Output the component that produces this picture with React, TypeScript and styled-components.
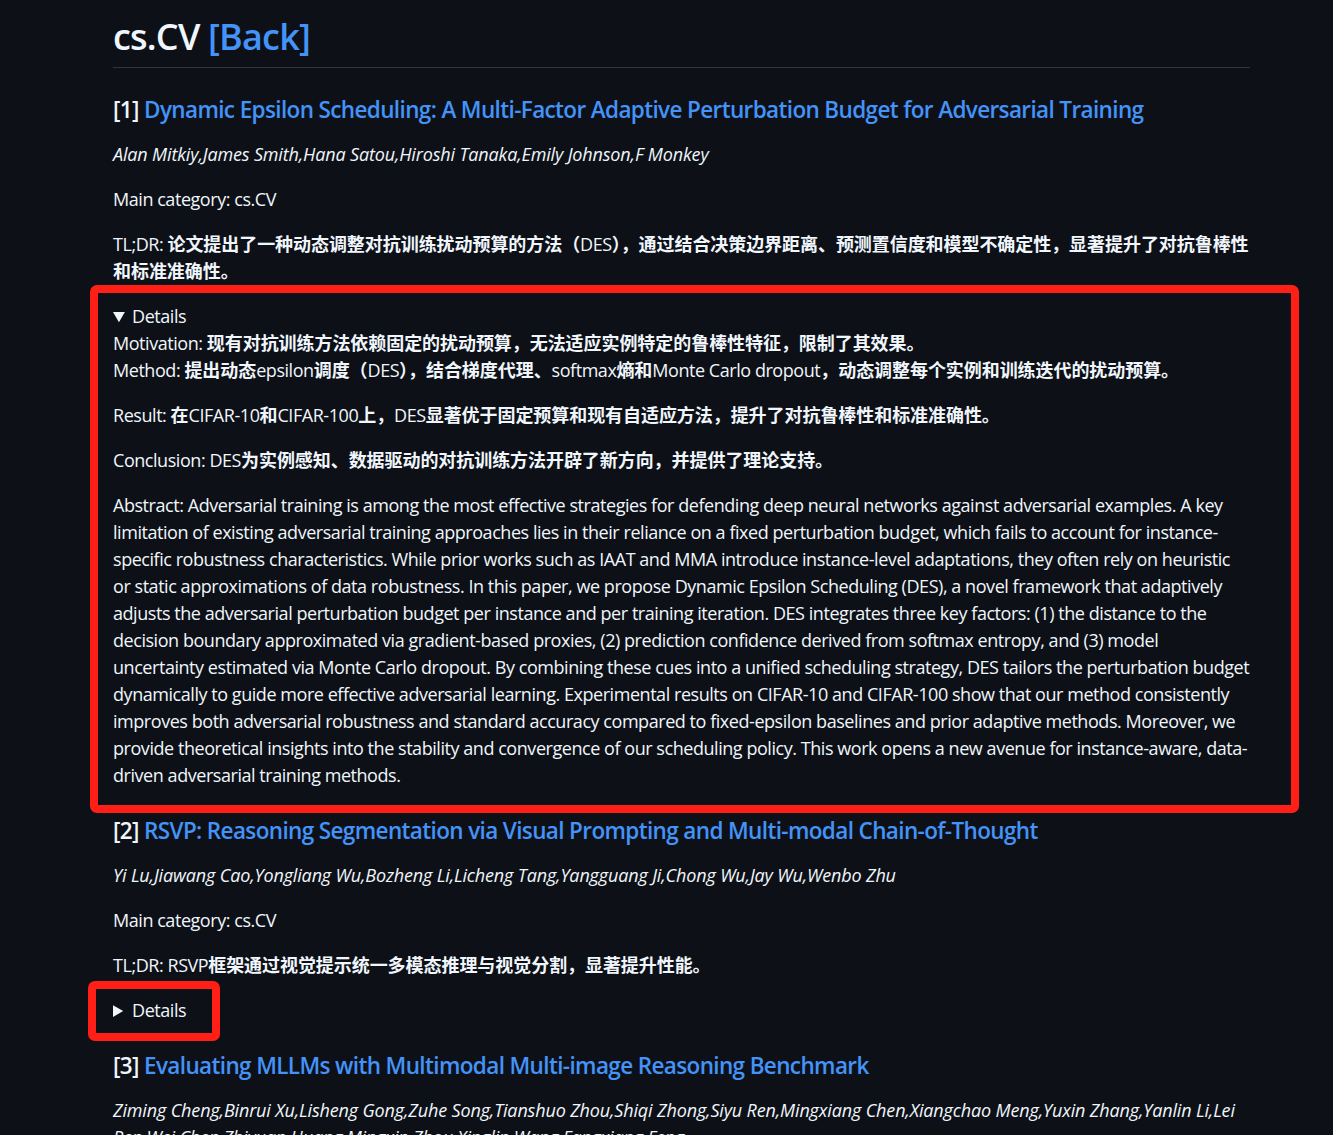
import React from 'react';
import styled, { createGlobalStyle } from 'styled-components';

const GlobalStyle = createGlobalStyle`
  html, body {
    margin: 0;
    padding: 0;
    background: #0d1117;
  }
  body {
    color: #f0f6fc;
    font-family: "Open Sans", "Noto Sans CJK SC", sans-serif;
    font-size: 18px;
    line-height: 27px;
    letter-spacing: -0.45px;
  }
`;

const Page = styled.main`
  padding: 14px 83px 40px 113px;
`;

const Heading = styled.h1`
  margin: 0 0 18px;
  padding-bottom: 8px;
  font-size: 36px;
  line-height: 45px;
  font-weight: 600;
  letter-spacing: -0.8px;
  border-bottom: 1px solid #3d444db3;
`;

const Link = styled.a`
  color: #4493f8;
  text-decoration: none;
`;

const PaperTitle = styled.h3`
  margin: 28px 0 17px;
  font-size: 22.5px;
  line-height: 28px;
  font-weight: 600;
  letter-spacing: -0.63px;
`;

const Para = styled.p`
  margin: 0 0 18px;
`;

const Authors = styled(Para)`
  font-style: italic;
  letter-spacing: -0.15px;
`;

// Chinese runs: no tightening, heavier weight like the YaHei rendering
const Han = styled.span`
  letter-spacing: -0.06px;
  font-weight: 600;
`;

const DetailsWrap = styled.div`
  position: relative;
  margin: 0 0 18px;
`;

const Summary = styled.summary`
  cursor: pointer;
`;

const Annotation = styled.span<{ $top: number; $left: number; $bottom: number; $width?: number; $right?: number }>`
  position: absolute;
  top: ${(p) => p.$top}px;
  left: ${(p) => p.$left}px;
  bottom: ${(p) => p.$bottom}px;
  ${(p) => (p.$width !== undefined ? `width: ${p.$width}px;` : `right: ${p.$right ?? 0}px;`)}
  border: 8px solid #ff1f16;
  border-radius: 7px;
  box-sizing: border-box;
  pointer-events: none;
`;

const CJK = /([\u3000-\u303f\u3400-\u9fff\uff00-\uffef]+)/;

function Rich({ text }: { text?: string }) {
  if (!text) return null;
  return (
    <>
      {text.split(CJK).map((part, i) => (i % 2 === 1 ? <Han key={i}>{part}</Han> : part))}
    </>
  );
}

interface Paper {
  id: number;
  title: string;
  authors: string;
  category: string;
  tldr: string;
  open?: boolean;
  marked?: 'open' | 'closed';
  motivation?: string;
  method?: string;
  result?: string;
  conclusion?: string;
  abstract?: string;
}

const papers: Paper[] = [
  {
    id: 1,
    title: 'Dynamic Epsilon Scheduling: A Multi-Factor Adaptive Perturbation Budget for Adversarial Training',
    authors: 'Alan Mitkiy,James Smith,Hana Satou,Hiroshi Tanaka,Emily Johnson,F Monkey',
    category: 'cs.CV',
    tldr: '论文提出了一种动态调整对抗训练扰动预算的方法（DES），通过结合决策边界距离、预测置信度和模型不确定性，显著提升了对抗鲁棒性和标准准确性。',
    open: true,
    marked: 'open',
    motivation: '现有对抗训练方法依赖固定的扰动预算，无法适应实例特定的鲁棒性特征，限制了其效果。',
    method: '提出动态epsilon调度（DES），结合梯度代理、softmax熵和Monte Carlo dropout，动态调整每个实例和训练迭代的扰动预算。',
    result: '在CIFAR-10和CIFAR-100上，DES显著优于固定预算和现有自适应方法，提升了对抗鲁棒性和标准准确性。',
    conclusion: 'DES为实例感知、数据驱动的对抗训练方法开辟了新方向，并提供了理论支持。',
    abstract:
      'Adversarial training is among the most effective strategies for defending deep neural networks against adversarial examples. A key limitation of existing adversarial training approaches lies in their reliance on a fixed perturbation budget, which fails to account for instance-specific robustness characteristics. While prior works such as IAAT and MMA introduce instance-level adaptations, they often rely on heuristic or static approximations of data robustness. In this paper, we propose Dynamic Epsilon Scheduling (DES), a novel framework that adaptively adjusts the adversarial perturbation budget per instance and per training iteration. DES integrates three key factors: (1) the distance to the decision boundary approximated via gradient-based proxies, (2) prediction confidence derived from softmax entropy, and (3) model uncertainty estimated via Monte Carlo dropout. By combining these cues into a unified scheduling strategy, DES tailors the perturbation budget dynamically to guide more effective adversarial learning. Experimental results on CIFAR-10 and CIFAR-100 show that our method consistently improves both adversarial robustness and standard accuracy compared to fixed-epsilon baselines and prior adaptive methods. Moreover, we provide theoretical insights into the stability and convergence of our scheduling policy. This work opens a new avenue for instance-aware, data-driven adversarial training methods.',
  },
  {
    id: 2,
    title: 'RSVP: Reasoning Segmentation via Visual Prompting and Multi-modal Chain-of-Thought',
    authors: 'Yi Lu,Jiawang Cao,Yongliang Wu,Bozheng Li,Licheng Tang,Yangguang Ji,Chong Wu,Jay Wu,Wenbo Zhu',
    category: 'cs.CV',
    tldr: 'RSVP框架通过视觉提示统一多模态推理与视觉分割，显著提升性能。',
    marked: 'closed',
  },
  {
    id: 3,
    title: 'Evaluating MLLMs with Multimodal Multi-image Reasoning Benchmark',
    authors:
      'Ziming Cheng,Binrui Xu,Lisheng Gong,Zuhe Song,Tianshuo Zhou,Shiqi Zhong,Siyu Ren,Mingxiang Chen,Xiangchao Meng,Yuxin Zhang,Yanlin Li,Lei Ren,Wei Chen,Zhiyuan Huang,Mingxin Zhou,Xinglin Wang,Fangxiang Feng',
    category: 'cs.CV',
    tldr: '论文提出了多模态多图像推理基准MMRB，用于评估多模态大语言模型在多图像场景下的推理能力。',
  },
];

function PaperItem({ paper }: { paper: Paper }) {
  return (
    <section>
      <PaperTitle>
        [{paper.id}] <Link href="#">{paper.title}</Link>
      </PaperTitle>
      <Authors>{paper.authors}</Authors>
      <Para>Main category: {paper.category}</Para>
      <Para>
        TL;DR: <Rich text={paper.tldr} />
      </Para>
      <DetailsWrap>
        <details open={paper.open}>
          <Summary>Details</Summary>
          {paper.motivation && (
            <>
              <Para>
                Motivation: <Rich text={paper.motivation} />
                <br />
                Method: <Rich text={paper.method} />
              </Para>
              <Para>
                Result: <Rich text={paper.result} />
              </Para>
              <Para>
                Conclusion: <Rich text={paper.conclusion} />
              </Para>
              <Para>Abstract: {paper.abstract}</Para>
            </>
          )}
        </details>
        {paper.marked === 'open' && <Annotation $top={-18} $left={-23} $right={-49} $bottom={-24} />}
        {paper.marked === 'closed' && <Annotation $top={-16} $left={-25} $bottom={-17} $width={132} />}
      </DetailsWrap>
    </section>
  );
}

export default function App() {
  return (
    <>
      <GlobalStyle />
      <Page>
        <Heading>
          cs.CV <Link href="#">[Back]</Link>
        </Heading>
        {papers.map((p) => (
          <PaperItem key={p.id} paper={p} />
        ))}
      </Page>
    </>
  );
}
